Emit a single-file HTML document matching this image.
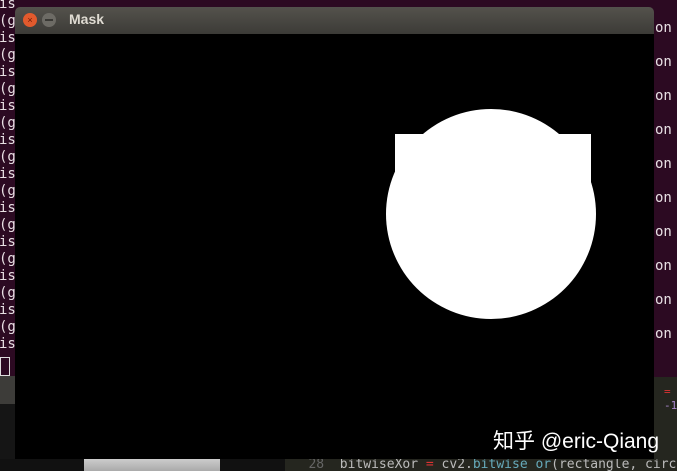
<!DOCTYPE html><html><head><style>
body{margin:0;width:677px;height:471px;overflow:hidden;background:#2c0a22;position:relative;font-family:"DejaVu Sans Mono","Liberation Mono",monospace}
.a{position:absolute}
.t{color:#e8e0e4;font-size:14px;line-height:17px}
</style></head><body>
<div class="a t" style="left:-1px;top:-4px;white-space:pre">is
(g
is
(g
is
(g
is
(g
is
(g
is
(g
is
(g
is
(g
is
(g
is
(g
is</div>
<div class="a" style="left:0;top:357px;width:8px;height:17px;border:1px solid #ddd;background:#2c0a22"></div>
<div class="a" style="left:0;top:376px;width:16px;height:28px;background:#3d3c39"></div>
<div class="a" style="left:0;top:404px;width:16px;height:67px;background:#151515"></div>
<div class="a t" style="left:655px;top:11px;white-space:pre;line-height:34px">on
on
on
on
on
on
on
on
on
on</div>
<div class="a" style="left:654px;top:377px;width:23px;height:94px;background:#25261f"></div>
<div class="a" style="left:664px;top:385px;color:#d33;font-size:11px">=</div>
<div class="a" style="left:664px;top:399px;color:#a8c;font-size:11px">-1</div>
<div class="a" style="left:0;top:459px;width:677px;height:12px;background:#111"></div>
<div class="a" style="left:84px;top:459px;width:136px;height:12px;background:linear-gradient(#ccc,#aaa)"></div>
<div class="a" style="left:285px;top:459px;width:392px;height:12px;background:#25261f;color:#bbb;font-size:13px;line-height:12px;white-space:pre;overflow:hidden">   <span style="color:#666">28</span>  bitwiseXor <span style="color:#d33">=</span> cv2.<span style="color:#6ab">bitwise</span> <span style="color:#6ab">or</span>(rectangle, circ</div>
<div class="a" style="left:15px;top:7px;width:639px;height:27px;background:linear-gradient(#54524c,#3c3b37);border-radius:5px 5px 0 0"></div>
<div class="a" style="left:23px;top:13px;width:14px;height:14px;border-radius:50%;background:#e25a2d;color:#6a1a05;font-size:9px;line-height:14px;text-align:center;font-family:'Liberation Sans'">×</div>
<div class="a" style="left:42px;top:13px;width:14px;height:14px;border-radius:50%;background:#6d6b65"><div class="a" style="left:3px;top:6px;width:8px;height:2px;background:#3a3935"></div></div>
<div class="a" style="left:69px;top:11px;color:#dfdbd2;font:bold 14px 'Liberation Sans',sans-serif">Mask</div>
<div class="a" style="left:15px;top:34px;width:639px;height:425px;background:#000"></div>
<div class="a" style="left:386px;top:109px;width:210px;height:210px;border-radius:50%;background:#fff"></div>
<div class="a" style="left:395px;top:134px;width:196px;height:80px;background:#fff"></div>
<div class="a" style="left:493px;top:425px;color:#fff;font:21px 'Liberation Sans','Noto Sans CJK SC',sans-serif">知乎 @eric-Qiang</div>
</body></html>
